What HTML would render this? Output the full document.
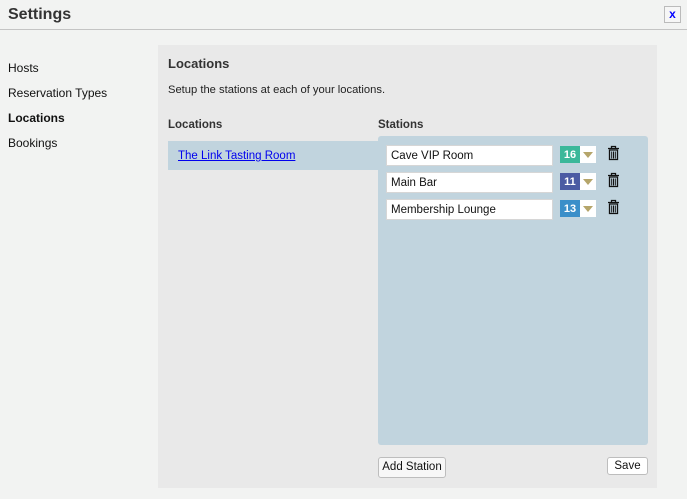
<!DOCTYPE html>
<html><head><style>
*{margin:0;padding:0;box-sizing:border-box}
body{width:687px;height:499px;background:#f2f3f2;font-family:"Liberation Sans",Arial,sans-serif;font-size:11.5px;color:#222;position:relative;overflow:hidden;line-height:1.2}
.a{position:absolute;white-space:nowrap}
.hdr{left:0;top:0;width:687px;height:30px;border-bottom:1px solid #c4c4c4}
.close{left:664px;top:6px;width:17px;height:17px;border:1px solid #bbb;background:#f6f6f6;color:#00f;font-weight:bold;font-size:12px;text-align:center;line-height:15px}
.nav{font-size:12px;color:#111}
.inp{left:386px;width:167px;height:21px;background:#fff;border:1px solid #d6d6d6;padding:4px 0 0 4px;line-height:13px;font-size:11.5px;color:#111}
.badge{left:560px;width:20px;height:17px;color:#fff;font-weight:bold;font-size:11px;text-align:center;padding-top:3px;line-height:12px}
.dd{left:580px;width:16px;height:17px;background:#fff}
.dd:after{content:"";position:absolute;left:3px;top:6px;border-left:5px solid transparent;border-right:5px solid transparent;border-top:6px solid #b5a56a}
.btn{background:#f7f7f7;border:1px solid #bdbdbd;border-radius:3px;font-size:11.5px;text-align:center;color:#111;line-height:13px}
</style></head><body>
<div class="a hdr"></div>
<div class="a" style="left:8px;top:5px;font-size:16px;font-weight:bold;color:#333">Settings</div>
<div class="a close">x</div>
<div class="a nav" style="left:8px;top:61px">Hosts</div>
<div class="a nav" style="left:8px;top:86px">Reservation Types</div>
<div class="a nav" style="left:8px;top:111px;font-weight:bold">Locations</div>
<div class="a nav" style="left:8px;top:136px">Bookings</div>
<div class="a" style="left:158px;top:45px;width:499px;height:443px;background:#e9e9e9"></div>
<div class="a" style="left:168px;top:56px;font-size:13px;font-weight:bold;color:#333">Locations</div>
<div class="a" style="left:168px;top:84px;font-size:11.2px">Setup the stations at each of your locations.</div>
<div class="a" style="left:168px;top:119px;font-weight:bold;color:#333">Locations</div>
<div class="a" style="left:378px;top:119px;font-weight:bold;color:#333">Stations</div>
<div class="a" style="left:168px;top:141px;width:212px;height:29px;background:#c1d4de"></div>
<div class="a" style="left:178px;top:150px;color:#00e;text-decoration:underline;font-size:11.5px">The Link Tasting Room</div>
<div class="a" style="left:378px;top:136px;width:270px;height:309px;background:#c1d4de;border-radius:3px"></div>
<div class="a inp" style="top:145px">Cave VIP Room</div>
<div class="a inp" style="top:172px">Main Bar</div>
<div class="a inp" style="top:199px">Membership Lounge</div>
<div class="a badge" style="top:146px;background:#3bb89a">16</div><div class="a dd" style="top:146px"></div>
<div class="a badge" style="top:173px;background:#4b5ba3">11</div><div class="a dd" style="top:173px"></div>
<div class="a badge" style="top:200px;background:#3b8fc9">13</div><div class="a dd" style="top:200px"></div>
<svg class="a" style="left:607px;top:145px" width="13" height="70" viewBox="0 0 13 70">
<g fill="none" stroke="#111" stroke-width="1.3">
<g><path d="M1 3.5h11M4.5 3.5V1.5h4v2M2.5 5h8v9.5h-8z"/><path d="M4.7 6.5v7M6.5 6.5v7M8.3 6.5v7" stroke-width="1"/></g>
<g transform="translate(0,27)"><path d="M1 3.5h11M4.5 3.5V1.5h4v2M2.5 5h8v9.5h-8z"/><path d="M4.7 6.5v7M6.5 6.5v7M8.3 6.5v7" stroke-width="1"/></g>
<g transform="translate(0,54)"><path d="M1 3.5h11M4.5 3.5V1.5h4v2M2.5 5h8v9.5h-8z"/><path d="M4.7 6.5v7M6.5 6.5v7M8.3 6.5v7" stroke-width="1"/></g>
</g></svg>
<div class="a btn" style="left:378px;top:457px;width:68px;height:21px;padding-top:3px">Add Station</div>
<div class="a btn" style="left:607px;top:457px;width:41px;height:18px;background:#fff;padding-top:2px">Save</div>
</body></html>
